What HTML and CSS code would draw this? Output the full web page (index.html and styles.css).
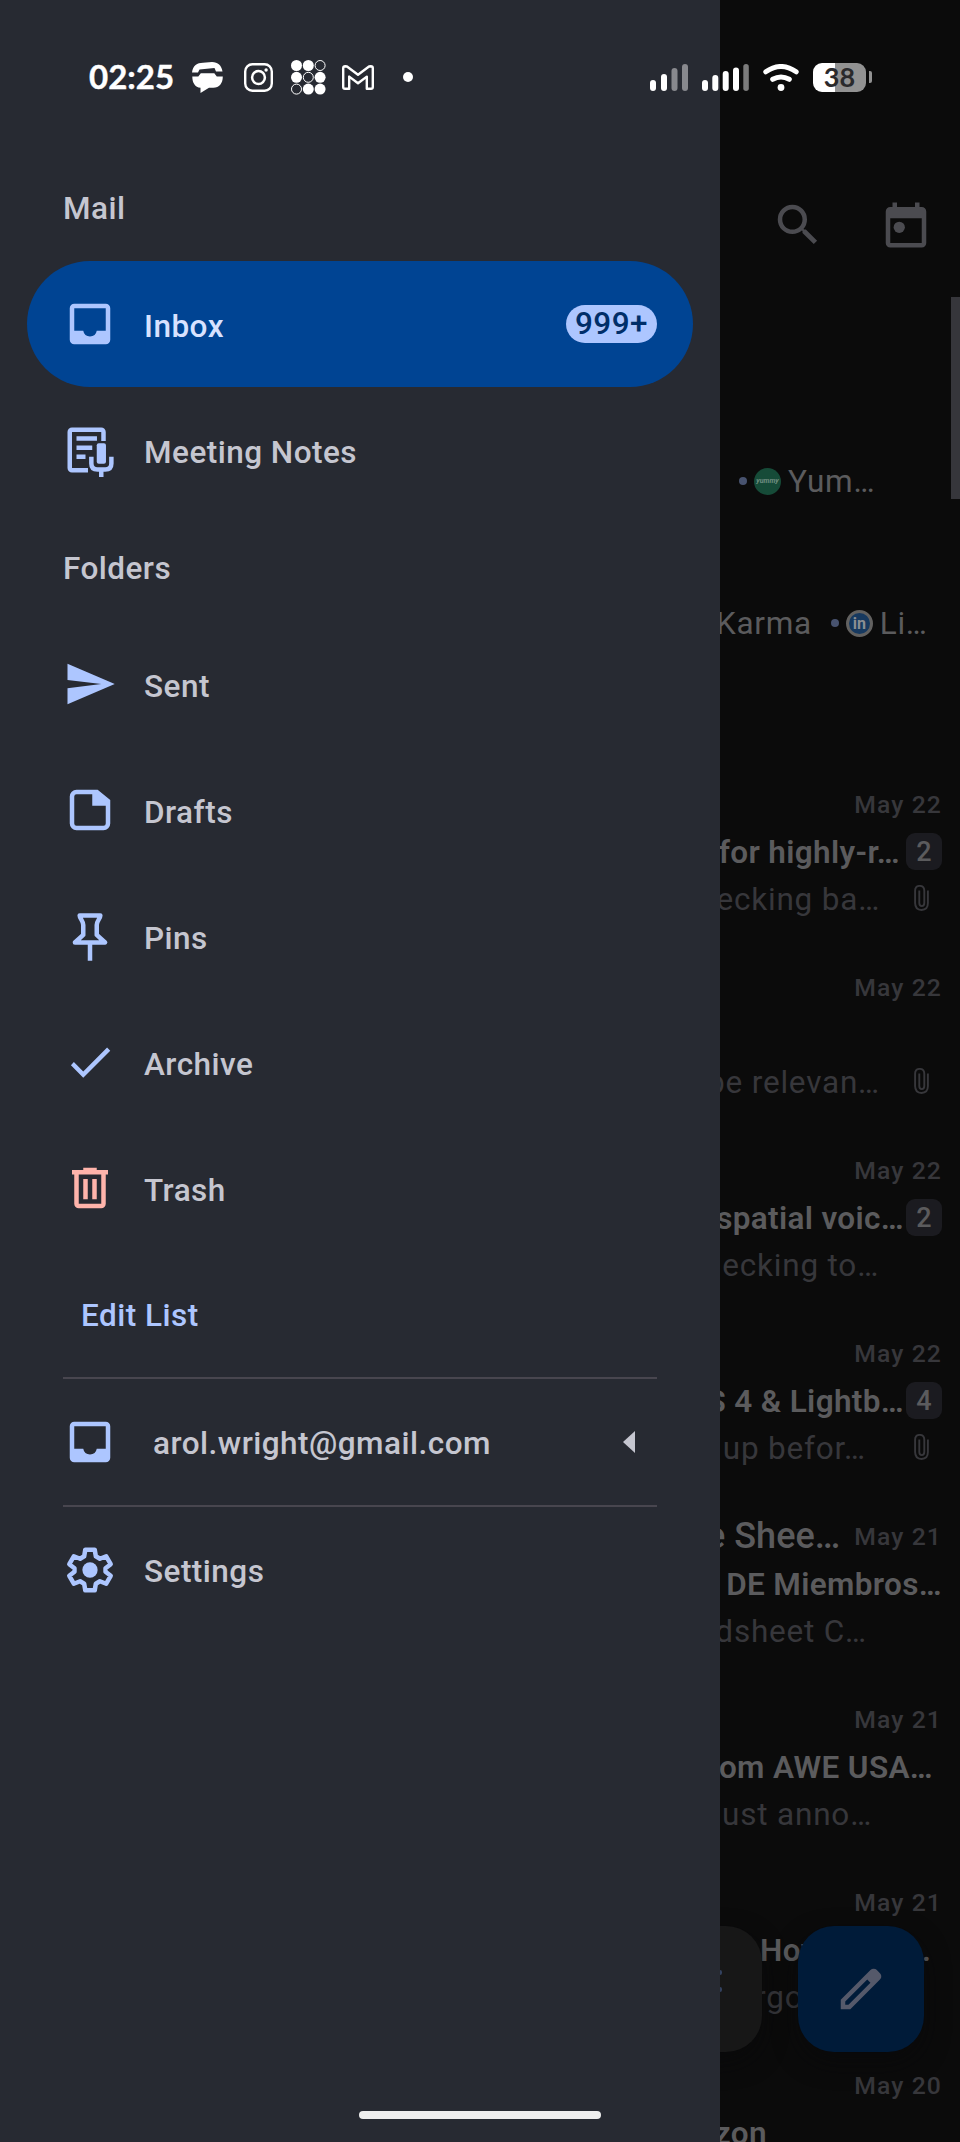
FILE: index.html
```html
<!DOCTYPE html>
<html lang="en">
<head>
<meta charset="utf-8">
<title>Mail</title>
<link rel="stylesheet" href="styles.css">
</head>
<body>
<svg width="0" height="0" class="defs">
  <symbol id="inbox" viewBox="0 0 24 24"><path fill-rule="evenodd" d="M5 3h14a2 2 0 0 1 2 2v14a2 2 0 0 1-2 2H5a2 2 0 0 1-2-2V5a2 2 0 0 1 2-2zM5 5v10h4a3.05 3.05 0 0 0 6 0h4V5z"/></symbol>
  <symbol id="clip" viewBox="0 0 15 26" ><path fill="none" stroke="currentColor" stroke-width="1.9" d="M13.9 5.5v12.6c0 4.2-2.4 6.9-6.4 6.9s-6.4-2.7-6.4-6.9V5.8C1.100 2.700 3 .9 5.700.9s4.600 1.800 4.600 4.900v12.300c0 1.900-1 3-2.500 3s-2.500-1.100-2.500-3V5.500"/></symbol>
</svg>
<div class="screen">
  <aside class="drawer">
    <h2 class="section">Mail</h2>
    <a class="row row-active"><svg class="icon" viewBox="0 0 24 24"><use href="#inbox"/></svg><span class="label">Inbox</span><span class="count">999+</span></a>
    <a class="row"><svg class="icon icon-notes" viewBox="0 0 24 24"><path fill="none" stroke="currentColor" stroke-width="2" d="M18 8V4a1 1 0 0 0-1-1H4a1 1 0 0 0-1 1v16a1 1 0 0 0 1 1h7.100M6 6.900h9.100M6 11h7M6 15h4M12.600 15v3c0 1.800 1 2.700 2.700 2.700h3.500c1.700 0 2.700-.9 2.700-2.700v-3M17 20.600V24"/><rect x="15" y="9" width="4.100" height="9.100" rx=".9"/></svg><span class="label">Meeting Notes</span></a>
    <h2 class="section">Folders</h2>
    <a class="row"><svg class="icon" viewBox="0 0 24 24"><path d="M2 21L23 12 2 3v7.200L17 12 2 13.900z"/></svg><span class="label">Sent</span></a>
    <a class="row"><svg class="icon" viewBox="0 0 24 24"><path fill-rule="evenodd" d="M6 3h9.400L21 7.500V18a3 3 0 0 1-3 3H6a3 3 0 0 1-3-3V6a3 3 0 0 1 3-3zm0 2a1 1 0 0 0-1 1v12a1 1 0 0 0 1 1h12a1 1 0 0 0 1-1v-7.900h-6V5z"/></svg><span class="label">Drafts</span></a>
    <a class="row"><svg class="icon" viewBox="0 0 24 24"><path fill="none" stroke="currentColor" stroke-width="2" stroke-linejoin="round" d="M7.400 2.900h9.200c0 1.300-1.600 2.300-1.600 4.200v4.400l3.700 3.400H5.300L9 11.500V7.100C9 5.200 7.400 4.200 7.400 2.900zM12 15v8"/></svg><span class="label">Pins</span></a>
    <a class="row"><svg class="icon" viewBox="0 0 24 24"><path d="M9 16.170L4.830 12l-1.300 1.410L9 19 21 7l-1.410-1.410z"/></svg><span class="label">Archive</span></a>
    <a class="row"><svg class="icon icon-danger" viewBox="0 0 24 24"><path fill-rule="evenodd" d="M7 21a2 2 0 0 1-2-2V6H4V4h5V3h6v1h5v2h-1v13a2 2 0 0 1-2 2zM17 6H7v13h10zM9 17h2V8H9zm4 0h2V8h-2z"/></svg><span class="label">Trash</span></a>
    <a class="row row-edit"><span class="label">Edit List</span></a>
    <a class="row row-account"><svg class="icon" viewBox="0 0 24 24"><use href="#inbox"/></svg><span class="label">arol.wright@gmail.com</span><svg class="caret" viewBox="0 0 12 22"><path d="M12 0v22L0 11z"/></svg></a>
    <a class="row row-settings"><svg class="icon" viewBox="0 0 24 24"><path fill="none" stroke="currentColor" stroke-width="2" stroke-linejoin="round" d="M9.900 3h4.200l.5 2.900 1.800 1.100 2.800-1.100 2 3.500-2.300 1.800v1.600l2.300 1.800-2 3.500-2.800-1.100-1.800 1.100-.5 2.900H9.900l-.5-2.900L7.600 17l-2.800 1.100-2-3.500 2.300-1.800v-1.600L2.800 9.400l2-3.500L7.600 7l1.800-1.100z"/><circle cx="12" cy="12" r="3.400"/></svg><span class="label">Settings</span></a>
  </aside>

  <main class="mailbox">
    <header class="toolbar">
      <svg class="icon" viewBox="0 0 24 24"><path d="M15.500 14h-.790l-.280-.270A6.470 6.470 0 0 0 16 9.500 6.500 6.500 0 1 0 9.500 16c1.610 0 3.090-.590 4.230-1.570l.270.280v.790l5 4.990L20.490 19l-4.990-5zm-6 0C7.010 14 5 11.990 5 9.500S7.010 5 9.500 5 14 7.010 14 9.500 11.990 14 9.500 14z"/></svg>
      <svg class="icon" viewBox="0 0 24 24"><path fill-rule="evenodd" d="M6 2h2v2h8V2h2v2h1a2 2 0 0 1 2 2v14a2 2 0 0 1-2 2H5a2 2 0 0 1-2-2V6a2 2 0 0 1 2-2h1zM5 9v11h14V9z"/><circle cx="9" cy="13" r="2.500"/></svg>
    </header>
    <div class="bundle bundle-first"><i class="dot"></i><span class="avatar avatar-yummy">yummy</span><span>Yum…</span></div>
    <div class="bundle bundle-second"><span class="karma">Karma</span><i class="dot"></i><span class="avatar avatar-in"><b>in</b></span><span>Li…</span></div>
    <section class="mails">
      <article class="mail"><p class="top"><time>May 22</time></p><p class="subject">for highly-r…<span class="thread">2</span></p><p class="preview end-a">ecking ba…<svg class="clip"><use href="#clip"/></svg></p></article>
      <article class="mail"><p class="top"><time>May 22</time></p><p class="subject"></p><p class="preview end-a">be relevan…<svg class="clip"><use href="#clip"/></svg></p></article>
      <article class="mail"><p class="top"><time>May 22</time></p><p class="subject tight">spatial voic…<span class="thread">2</span></p><p class="preview end-b">ecking to…</p></article>
      <article class="mail"><p class="top"><time>May 22</time></p><p class="subject tight">S 4 &amp; Lightb…<span class="thread">4</span></p><p class="preview end-c">up befor…<svg class="clip"><use href="#clip"/></svg></p></article>
      <article class="mail"><p class="top"><strong>e Shee…</strong><time>May 21</time></p><p class="subject">DE Miembros…</p><p class="preview end-d">dsheet C…</p></article>
      <article class="mail"><p class="top"><time>May 21</time></p><p class="subject end-e">om AWE USA…</p><p class="preview end-f">ust anno…</p></article>
      <article class="mail"><p class="top"><time>May 21</time></p><p class="subject split"><span>How</span><span>…</span></p><p class="preview start">rgo</p></article>
      <article class="mail"><p class="top"><time>May 20</time></p><p class="subject end-g">zon</p></article>
    </section>
    <i class="scrollbar"></i>
    <div class="fab fab-side"><i></i><i></i></div>
    <div class="fab fab-compose"><svg class="icon" viewBox="0 0 24 24"><path fill-rule="evenodd" d="M5 19h1.425L16.200 9.225 14.775 7.800 5 17.575zm-2 2v-4.250L16.200 3.575q.3-.275.663-.425.362-.15.762-.15t.775.15q.375.15.65.45L20.425 5q.3.275.437.650.138.375.138.750 0 .4-.138.763-.137.362-.437.637L7.250 21z"/></svg></div>
  </main>

  <div class="status">
    <span class="clock">02:25</span>
    <svg class="s-chat" viewBox="0 0 31 31"><path d="M0 10.500C1 3.500 5 .8 11 .8L20 0c6 0 9.500 3.500 10.500 9.500l-6.500 0-1.500-3.500L7.500 7.500 6 10.500z"/><path d="M.3 14.500h6l2.500-3.200h13.500l2.500 3.200h6c0 7-3.500 11-9.500 11.300h-4.300L8.500 31v-5.200C3 25.200.3 21 .3 14.500z"/></svg>
    <svg class="s-insta" viewBox="0 0 29 29"><rect x="1.200" y="1.200" width="26.600" height="26.600" rx="7.200" fill="none" stroke="#fff" stroke-width="2.400"/><circle cx="14.500" cy="14.500" r="6.400" fill="none" stroke="#fff" stroke-width="2.500"/><circle cx="22.100" cy="7" r="1.700"/></svg>
    <svg class="s-grid" viewBox="0 0 35 35"><circle cx="5.500" cy="5.500" r="5.500"/><circle cx="17.300" cy="5.500" r="5.500"/><circle cx="29.100" cy="5.500" r="5" class="ring"/><circle cx="5.500" cy="17.300" r="5.500"/><circle cx="17.300" cy="17.300" r="5" class="ring"/><circle cx="29.100" cy="17.300" r="5.500"/><circle cx="5.500" cy="29.100" r="5" class="ring"/><circle cx="17.300" cy="29.100" r="5.500"/><circle cx="29.100" cy="29.100" r="5.500"/></svg>
    <svg class="s-gmail" viewBox="0 0 32 25"><path fill="none" stroke="#fff" stroke-width="2.400" stroke-linejoin="round" d="M1.200 3.200Q1.200 1.200 3.200 1.200L5 1.500 16 9.700 27 1.500l1.800-.3q2 0 2 2v18.700q0 1.800-1.800 1.800h-4.200V11.600L16 18.300 7.200 11.600v12.100H3q-1.800 0-1.800-1.800z"/></svg>
    <i class="s-dot"></i>
    <svg class="s-sig1" viewBox="0 0 39 27"><g><rect y="16" width="6" height="11" rx="3"/><rect x="11" y="10" width="6" height="17" rx="3"/><rect x="21.500" y="4" width="6" height="23" rx="3" class="off"/><rect x="32" y="0" width="6" height="27" rx="3" class="off"/></g></svg>
    <svg class="s-sig2" viewBox="0 0 47 27"><rect y="16" width="6" height="11" rx="3"/><rect x="10.300" y="11" width="6" height="16" rx="3"/><rect x="20.700" y="7" width="6" height="20" rx="3"/><rect x="31" y="3.500" width="6" height="23.500" rx="3"/><rect x="41.300" y="0" width="5.500" height="27" rx="2.700" class="off2"/></svg>
    <svg class="s-wifi" viewBox="0 0 36 27"><path fill="none" stroke="#fff" stroke-width="5" stroke-linecap="round" d="M2.800 7.800Q18-2.800 33.200 7.800M9.700 15.300Q18 10.700 26.300 15.300"/><circle cx="18" cy="23.500" r="3.400"/></svg>
    <span class="battery">38</span><i class="nub"></i>
  </div>
  <i class="handle"></i>
</div>
</body>
</html>
```
FILE: styles.css
```css
* { box-sizing: border-box; }
body { margin: 0; background: #0b0b0b; font-family: Roboto, "Liberation Sans", sans-serif; }
p, h2 { margin: 0; }
.defs { position: absolute; }
.screen {
  position: relative;
  display: grid;
  grid-template-columns: 720px 240px;
  width: 960px;
  height: 2142px;
  overflow: hidden;
}
.icon { width: 54px; height: 54px; flex: none; fill: currentColor; color: #adc6ff; }

/* Navigation drawer */
.drawer { background: #272a32; display: flex; flex-direction: column; padding: 153px 27px 0; }
.section {
  display: flex;
  align-items: center;
  height: 108px;
  padding: 2px 0 0 36px;
  font-size: 31.5px;
  font-weight: 500;
  letter-spacing: .45px;
  color: #c5c6d0;
  flex: none;
}
.row {
  flex: none;
  display: flex;
  align-items: center;
  height: 126px;
  padding: 0 36px;
  border-radius: 63px;
  color: #c5c6d0;
  font-size: 31.5px;
  font-weight: 500;
  letter-spacing: .48px;
}
.label { margin-left: 27px; padding-top: 4px; }
.row-active { background: #004493; color: #d8e2ff; }
.icon-danger { color: #ffb4ab; }
.count {
  margin-left: auto;
  width: 91px;
  height: 38px;
  border-radius: 19px;
  background: #adc6ff;
  color: #002e69;
  line-height: 38px;
  text-align: center;
  letter-spacing: .5px;
}
.row-edit { color: #adc6ff; padding-left: 27px; }
.row-edit .label, .row-settings .label { padding-top: 2px; }
.row-account { height: 130px; margin: 0 36px; padding: 0; border-radius: 0; border: solid #48464f; border-width: 2px 0; }
.row-account .label { margin-left: 36px; padding-top: 2px; }
.caret { width: 12px; height: 22px; margin-left: auto; margin-right: 22px; fill: #c5c6d0; }

/* Dimmed mailbox behind the drawer */
.mailbox { position: relative; overflow: hidden; background: #0b0b0b; color: #5b5b5d; display: flex; flex-direction: column; }
.toolbar { display: flex; justify-content: space-between; padding: 198px 27px 0 51px; height: 462px; flex: none; }
.toolbar .icon { color: #4b4b50; }
.bundle { display: flex; align-items: center; height: 38px; flex: none; font-size: 31.5px; letter-spacing: .7px; white-space: nowrap; }
.bundle-first { padding-left: 19px; }
.bundle-second { margin-top: 104px; margin-left: -4px; }
.karma { margin-right: 19px; }
.dot { width: 8px; height: 8px; border-radius: 50%; background: #48536f; flex: none; }
.avatar { width: 27px; height: 27px; border-radius: 50%; margin: 0 7px; flex: none; display: flex; align-items: center; justify-content: center; letter-spacing: 0; }
.avatar-yummy { background: #164b38; color: #728f83; font-size: 7px; font-weight: 700; font-style: italic; }
.avatar-in { background: #17395f; border: 3px solid #626160; color: #8b8e92; font-size: 16px; }
.mails { margin-top: 138px; }
.mail { height: 183px; padding-right: 18px; white-space: nowrap; }
.mail p { display: flex; align-items: center; justify-content: flex-end; height: 48px; }
.mail .top strong { font-size: 36px; font-weight: 500; letter-spacing: 0; margin-right: 14px; }
.mail time { font-size: 24.75px; font-weight: 500; letter-spacing: 1.1px; color: #37373b; }
.mail .subject { font-size: 31.5px; font-weight: 600; letter-spacing: .35px; }
.mail .preview { font-size: 31.5px; letter-spacing: .8px; color: #37373b; position: relative; height: 47px; }
.thread {
  flex: none;
  width: 36px;
  height: 37px;
  margin: 0 0 2px 6px;
  border-radius: 9px;
  background: #1b1b20;
  font-size: 27px;
  font-weight: 500;
  text-align: center;
  line-height: 38px;
  letter-spacing: 0;
}
.tight .thread { margin-left: 2px; }
.clip { position: absolute; right: 13px; top: 9px; width: 15px; height: 26px; color: #37373b; }
.mail .end-a { padding-right: 62px; }
.mail .end-b { padding-right: 63px; }
.mail .end-c { padding-right: 76px; }
.mail .end-d { padding-right: 75px; }
.mail .end-e { padding-right: 9px; }
.mail .end-f { padding-right: 70px; }
.mail .end-g { padding-right: 175px; }
.mail .split { justify-content: space-between; padding: 0 11px 0 40px; }
.mail .start { justify-content: flex-start; padding-left: 35px; }
.scrollbar { position: absolute; right: 0; top: 297px; width: 9px; height: 202px; background: #36363b; }
.fab { position: absolute; top: 1926px; width: 126px; height: 126px; border-radius: 36px; display: flex; align-items: center; justify-content: center; box-shadow: 0 10px 24px rgba(8, 8, 10, .6); }
.fab-side { left: -84px; background: #171717; flex-direction: column; gap: 12px; align-items: flex-end; padding: 0 40px 16px 0; }
.fab-side i { width: 8px; height: 5px; border-radius: 2px; background: #33415f; }
.fab-compose { left: 78px; background: #001b39; }
.fab-compose .icon { color: #55596a; }

/* System status bar, drawn over both panes */
.status { position: absolute; left: 0; top: 57px; width: 960px; height: 40px; display: flex; align-items: center; padding-left: 89px; color: #fff; fill: #fff; }
.status svg, .status i, .status span { flex: none; }
.clock { font: 700 33px/38px Lato, sans-serif; width: 103px; height: 40px; letter-spacing: 0; -webkit-text-stroke: .4px #fff; }
.s-chat { width: 31px; height: 31px; margin-right: 21px; }
.s-insta { width: 29px; height: 29px; margin-right: 17.5px; }
.s-grid { width: 35px; height: 35px; margin-right: 16.5px; }
.ring { fill: none; stroke: #fff; stroke-width: 1; }
.s-gmail { width: 32px; height: 25px; margin-right: 29px; }
.s-dot { width: 10px; height: 10px; border-radius: 50%; background: #fff; margin-right: 237px; }
.s-sig1 { width: 39px; height: 27px; margin-right: 13px; }
.s-sig2 { width: 47px; height: 27px; margin-right: 14px; }
.off { fill: #88898e; }
.off2 { fill: #7b7b7b; }
.s-wifi { width: 36px; height: 27px; margin-right: 14px; }
.battery { width: 53px; height: 29px; border-radius: 9px; background: linear-gradient(90deg, #fff 22px, #929292 22px); color: #2a2a2c; font: 700 27px/28px Lato, sans-serif; text-align: center; }
.nub { width: 3px; height: 12px; margin-left: 3px; border-radius: 0 2px 2px 0; background: #929292; }
.handle { position: absolute; left: 359px; top: 2111px; width: 242px; height: 8px; border-radius: 4px; background: #eee; }
```
